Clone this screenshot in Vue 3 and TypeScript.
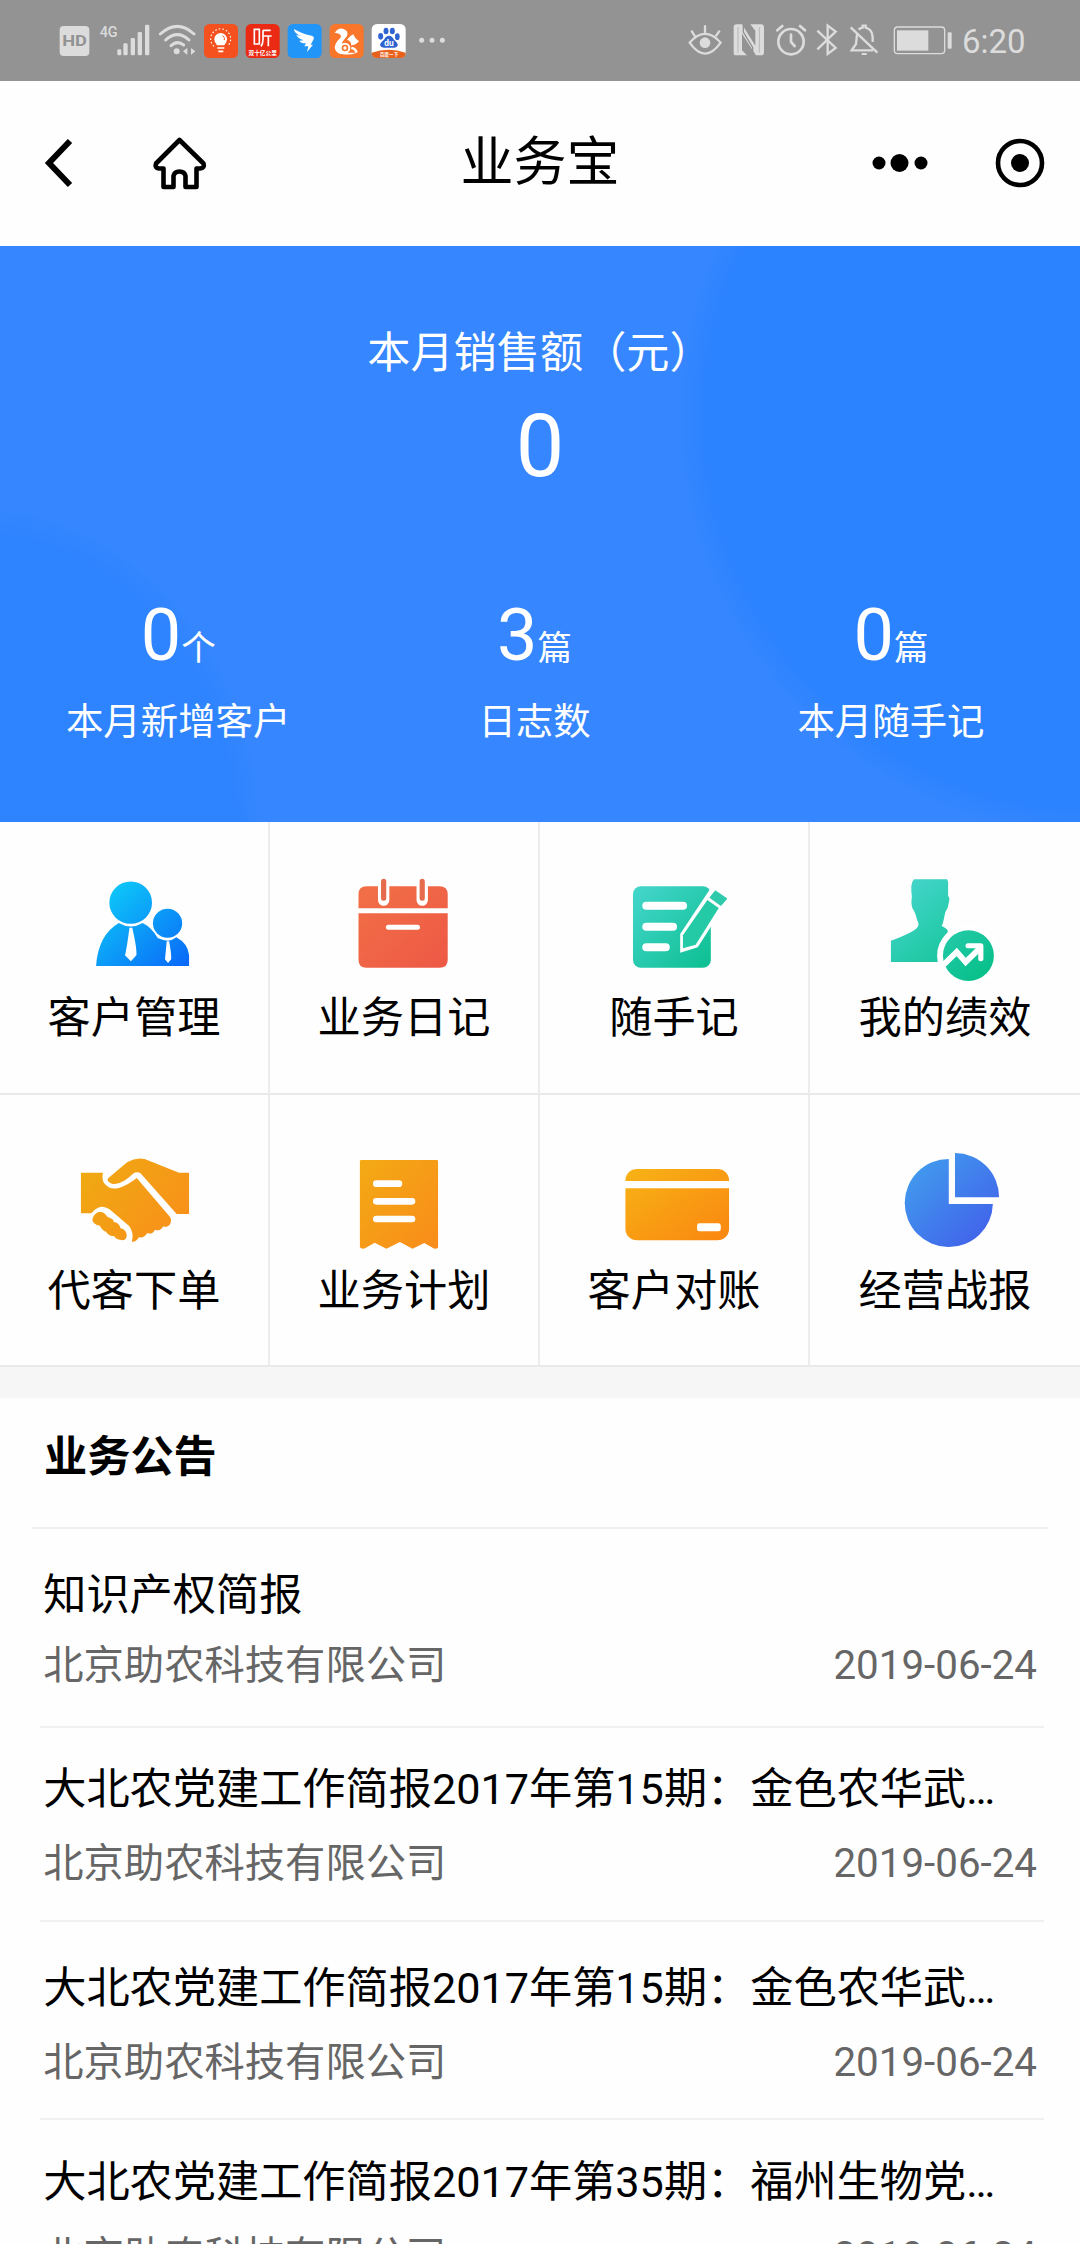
<script setup lang="ts">
interface Stat { value: string; unit: string; label: string }
interface Entry { icon: string; label: string; box: string }
interface Notice { title: string; company: string; date: string }

const stats: Stat[] = [
  { value: '0', unit: '个', label: '本月新增客户' },
  { value: '3', unit: '篇', label: '日志数' },
  { value: '0', unit: '篇', label: '本月随手记' },
]

const entries: Entry[] = [
  { icon: 'customers', label: '客户管理', box: '0 150 784 360' },
  { icon: 'diary', label: '业务日记', box: '784 150 784 360' },
  { icon: 'note', label: '随手记', box: '0 150 784 360' },
  { icon: 'performance', label: '我的绩效', box: '784 150 784 360' },
  { icon: 'order', label: '代客下单', box: '0 156 784 360' },
  { icon: 'plan', label: '业务计划', box: '784 156 784 360' },
  { icon: 'account', label: '客户对账', box: '0 156 784 360' },
  { icon: 'report', label: '经营战报', box: '784 156 784 360' },
]

const company = '北京助农科技有限公司'
const notices: Notice[] = [
  { title: '知识产权简报', company, date: '2019-06-24' },
  { title: '大北农党建工作简报2017年第15期：金色农华武…', company, date: '2019-06-24' },
  { title: '大北农党建工作简报2017年第15期：金色农华武…', company, date: '2019-06-24' },
  { title: '大北农党建工作简报2017年第35期：福州生物党…', company, date: '2019-06-24' },
]
</script>

<template>
  <div class="page">
    <div class="status">
      <div class="status-side">
        <svg width="38" height="40" viewBox="50 60 114 120">
          <rect x="58" y="78" width="89" height="90" rx="12" fill="#dcdcdc" />
          <text x="102.500" y="138" text-anchor="middle" font-size="43" font-weight="700" textLength="74" lengthAdjust="spacingAndGlyphs" fill="#929292">HD</text>
        </svg>
        <svg width="60" height="40" viewBox="164 60 180 120">
          <text x="178" y="112" font-size="46" font-weight="500" textLength="54" lengthAdjust="spacingAndGlyphs" fill="#dcdcdc">4G</text>
          <g fill="#dcdcdc">
            <rect x="231" y="148" width="12" height="18" rx="4" />
            <rect x="249" y="130" width="13" height="36" rx="4" />
            <rect x="271" y="114" width="13" height="52" rx="4" />
            <rect x="292" y="96" width="13" height="70" rx="4" />
            <rect x="314" y="74" width="13" height="92" rx="4" />
          </g>
        </svg>
        <svg width="45.333" height="40" viewBox="344 60 136 120">
          <g fill="none" stroke="#dcdcdc" stroke-width="9" stroke-linecap="round">
            <path d="M360 102Q411 56 461 102" />
            <path d="M376 120Q411 88 446 120" />
            <path d="M392 137Q411 120 430 135" />
          </g>
          <circle cx="409" cy="154" r="9" fill="#dcdcdc" />
          <path d="M441 144V165L428 154ZM452 144V165L465 154Z" fill="#dcdcdc" />
        </svg>
        <svg width="42" height="40" viewBox="478 60 126 120">
          <rect x="490" y="72" width="102" height="102" rx="16" fill="#f4511e" />
          <g stroke="#fff" stroke-width="3.500" stroke-linecap="round" stroke-dasharray="2 9" fill="none"><path d="M519 138A30 30 0 1 1 561 138" /></g>
          <path d="M529 136Q521 128 521 118A19 19 0 0 1 559 118Q559 128 551 136Z" fill="#fff" />
          <path d="M546 107Q553 112 551 120" fill="none" stroke="#f4511e" stroke-width="3" />
          <path d="M530 144H551M533 154H548" stroke="#fff" stroke-width="5" />
        </svg>
        <svg width="42" height="40" viewBox="604 60 126 120">
          <rect x="615" y="72" width="102" height="102" rx="16" fill="#ea2a12" />
          <path d="M641 88H656V132H641ZM667 91H690M667 91V118Q667 132 661 139M667 108H693M683 108V139" fill="none" stroke="#fff" stroke-width="5" />
          <text x="666" y="164" text-anchor="middle" font-size="17" font-weight="700" fill="#fff">双十亿公里</text>
        </svg>
        <svg width="42" height="40" viewBox="730 60 126 120">
          <rect x="741" y="72" width="102" height="102" rx="16" fill="#2196f8" />
          <path d="M760 87Q786 103 813 107Q823 110 818 119L810 134H817L799 156L803 139H791L796 130Q782 131 776 122L789 121Q771 115 767 105L782 108Q760 101 760 87Z" fill="#fff" />
        </svg>
        <svg width="42" height="40" viewBox="856 60 126 120">
          <rect x="867" y="72" width="102" height="102" rx="16" fill="#f9762b" />
          <path d="M882 99Q893 82 909 87Q925 93 919 108Q912 117 905 126Q900 137 905 148Q910 157 924 158H948Q931 166 907 163Q884 160 882 143Q883 130 895 118Q904 110 899 104Q892 98 882 99Z" fill="#fff" />
          <path d="M919 119Q925 108 938 103L944 114L955 124Q945 136 931 136Q934 125 919 119Z" fill="#fff" />
          <circle cx="913" cy="144" r="13" fill="#f9762b" stroke="#fff" stroke-width="6" />
          <circle cx="913" cy="144" r="5" fill="#fff" />
          <path d="M932 144Q944 145 948 158" fill="none" stroke="#fff" stroke-width="7" />
        </svg>
        <svg width="42" height="40" viewBox="982 60 126 120">
          <rect x="993" y="72" width="102" height="102" rx="16" fill="#fff" />
          <path d="M993 158Q1044 141 1095 158Q1095 174 1079 174H1009Q993 174 993 158Z" fill="#e8611c" />
          <g fill="#2f63d0">
            <ellipse cx="1020" cy="109" rx="7.500" ry="10" /><ellipse cx="1036" cy="93" rx="7.500" ry="10" />
            <ellipse cx="1055" cy="93" rx="7.500" ry="10" /><ellipse cx="1070" cy="110" rx="7" ry="10" />
            <path d="M1045 107Q1054 107 1060 119Q1073 129 1071 137Q1067 145 1056 143H1034Q1021 145 1018 136Q1018 128 1030 119Q1036 107 1045 107Z" />
          </g>
          <text x="1045" y="138" text-anchor="middle" font-size="25" font-weight="700" fill="#fff">du</text>
          <text x="1045" y="167" text-anchor="middle" font-size="14" font-weight="700" fill="#fff">百度一下</text>
        </svg>
        <svg width="44" height="40" viewBox="1108 60 132 120" fill="#dcdcdc">
          <circle cx="1143" cy="121" r="7.500" /><circle cx="1174" cy="121" r="7.500" /><circle cx="1205" cy="121" r="7.500" />
        </svg>
      </div>
      <div class="status-side">
        <svg width="45" height="40" viewBox="67 60 135 120" fill="none" stroke="#dcdcdc" stroke-width="7">
          <path d="M87 128Q133 75 180 128Q133 194 87 128ZM92 92L103 109M133 76V98M177 92L165 109" />
          <circle cx="133" cy="128" r="16" fill="#dcdcdc" stroke="none" />
        </svg>
        <svg width="44" height="40" viewBox="202 60 132 120">
          <path d="M227 73H244L284 137V92L269 73H302Q310 73 310 81V158Q310 166 302 166H286L244 101V151L259 166H227Q219 166 219 158V81Q219 73 227 73Z" fill="#dcdcdc" />
          <path d="M248 75V96L276 142V163" fill="none" stroke="#929292" stroke-width="4" />
          <path d="M232 82V158M296 82V158" stroke="#929292" stroke-width="1.500" />
        </svg>
        <svg width="41" height="40" viewBox="334 60 123 120" fill="none" stroke="#dcdcdc" stroke-width="8" stroke-linecap="round">
          <circle cx="391" cy="125" r="38" />
          <path d="M391 104V126L402 138M350 91L365 78M433 91L418 78" />
        </svg>
        <svg width="32" height="40" viewBox="457 60 96 120" fill="none" stroke="#dcdcdc" stroke-width="7">
          <path d="M470 92L525 144L501 162V77L525 95L470 148" />
        </svg>
        <svg width="45" height="40" viewBox="553 60 135 120" fill="none" stroke="#dcdcdc" stroke-width="7">
          <path d="M570 82L650 158M589 103L586 132L573 151H637M594 89Q600 83 606 83V77H615V83Q635 88 636 112V126" />
          <path d="M603 162H618" stroke-width="6" />
        </svg>
        <svg width="68" height="40" viewBox="688 60 204 120">
          <rect x="701" y="81" width="151" height="80" rx="10" fill="none" stroke="#dcdcdc" stroke-width="4" />
          <rect x="709" y="91" width="94" height="61" fill="#dcdcdc" />
          <rect x="861" y="97" width="12" height="49" rx="3" fill="#dcdcdc" />
        </svg>
        <span class="clock">6:20</span>
      </div>
    </div>

    <header class="nav">
      <svg width="240" height="60" viewBox="0 133 240 60" fill="none" stroke="#000">
        <path d="M70 141L49 163L70 185" stroke-width="6" />
        <path d="M179.500 140L156 163.500Q154.500 168 159 168.500H163.500V187H173.500V176Q174.500 171.500 179.500 171.500Q184.500 171.500 185.500 176V187H196.500V168.500H200Q205 168 203.500 163.500Z" stroke-width="4.600" stroke-linejoin="round" />
      </svg>
      <h1>业务宝</h1>
      <svg width="240" height="60" viewBox="840 133 240 60">
        <circle cx="879" cy="163" r="6.500" /><circle cx="899.500" cy="163" r="9" /><circle cx="921" cy="163" r="6.500" />
        <circle cx="1020" cy="163" r="22" fill="none" stroke="#000" stroke-width="4.600" /><circle cx="1020" cy="163" r="9" />
      </svg>
    </header>

    <section class="summary">
      <div class="sales-label">本月销售额（元）</div>
      <div class="sales-value">0</div>
      <div class="stats">
        <div v-for="s in stats" :key="s.label" class="stat">
          <div class="stat-value">{{ s.value }}<span>{{ s.unit }}</span></div>
          <div class="stat-label">{{ s.label }}</div>
        </div>
      </div>
    </section>

    <nav class="grid">
      <div v-for="e in entries" :key="e.icon" class="cell">
        <svg class="cell-icon" :viewBox="e.box" preserveAspectRatio="none">
          <g v-if="e.icon === 'customers'">
            <linearGradient id="g-cust" gradientUnits="userSpaceOnUse" x1="310" y1="190" x2="540" y2="440">
              <stop offset="0" stop-color="#0dccf8" /><stop offset="1" stop-color="#0a68f8" />
            </linearGradient>
            <g fill="url(#g-cust)">
              <ellipse cx="379.500" cy="248" rx="62" ry="63.500" />
              <path d="M279 438Q285 345 345 309Q380 330 414 309Q440 322 458 354Q475 362 487 362Q500 362 512 352Q545 370 549 405V438Z" />
              <ellipse cx="486.500" cy="310" rx="42.500" ry="43.500" />
            </g>
            <path d="M376 323H384Q398 385 396 406L380 424L363 406Q368 385 376 323ZM484 364H491Q498 400 497 418L488 429L479 418Q481 400 484 364Z" fill="#fff" />
          </g>
          <g v-else-if="e.icon === 'diary'">
            <linearGradient id="g-diary" x1="0" y1="0" x2="1" y2="1">
              <stop offset="0" stop-color="#f17046" /><stop offset="1" stop-color="#ee5846" />
            </linearGradient>
            <path d="M1064 199H1276Q1300 199 1300 223V265H1041V223Q1041 199 1064 199ZM1041 280H1300V420Q1300 443 1276 443H1064Q1041 443 1041 420Z" fill="url(#g-diary)" />
            <path d="M1114 181V241M1226 181V241" stroke="#fff" stroke-width="33" stroke-linecap="round" />
            <path d="M1114 184V235M1226 184V235" stroke="#e66a4c" stroke-width="15" stroke-linecap="round" />
            <path d="M1128 322H1212" stroke="#fff" stroke-width="15" stroke-linecap="round" />
          </g>
          <g v-else-if="e.icon === 'note'">
            <linearGradient id="g-note" x1="0" y1="0" x2="1" y2="1">
              <stop offset="0" stop-color="#45d6cd" /><stop offset="1" stop-color="#0cbf91" />
            </linearGradient>
            <rect x="270" y="199" width="226" height="244" rx="23" fill="url(#g-note)" />
            <path d="M309 257H415M309 320H386M309 382H365" stroke="#fff" stroke-width="24" stroke-linecap="round" />
            <path d="M505 190L553 229L458 382L407 398V342Z" fill="#fff" />
            <path d="M486 240L519 264L452 374L415 385V346Z" fill="#24c9a6" />
            <path d="M509 213L542 236L525 256L494 233Z" fill="#2fc9ac" stroke="#2fc9ac" stroke-width="3" stroke-linejoin="round" />
          </g>
          <g v-else-if="e.icon === 'performance'">
            <linearGradient id="g-perf" gradientUnits="userSpaceOnUse" x1="1040" y1="190" x2="1290" y2="480">
              <stop offset="0" stop-color="#45d6cd" /><stop offset="1" stop-color="#06bf88" />
            </linearGradient>
            <path d="M1086 178H1182Q1186 184 1185 195V228Q1191 232 1187 248Q1185 266 1177 276L1172 300Q1170 312 1166 318Q1180 324 1184 332L1180 426H1019V362Q1090 335 1097 320Q1102 312 1095 300Q1090 276 1082 266Q1076 250 1080 232Q1074 190 1086 178Z" fill="url(#g-perf)" />
            <ellipse cx="1244" cy="407" rx="91" ry="93" fill="#fff" />
            <ellipse cx="1244" cy="407" rx="74" ry="76" fill="url(#g-perf)" />
            <path d="M1166 440L1210 396L1236 426L1278 384" fill="none" stroke="#fff" stroke-width="17" />
            <path d="M1243 377H1280V416" fill="none" stroke="#fff" stroke-width="15" stroke-linecap="round" stroke-linejoin="round" />
          </g>
          <g v-else-if="e.icon === 'order'">
            <linearGradient id="g-order" gradientUnits="userSpaceOnUse" x1="240" y1="240" x2="500" y2="450">
              <stop offset="0" stop-color="#f0a912" /><stop offset="1" stop-color="#f8901a" />
            </linearGradient>
            <g fill="url(#g-order)">
              <path d="M314 262L370 213Q395 198 420 204L520 245H549V369H513L408 247Q398 240 388 247Q350 285 325 278Q308 272 314 262Z" />
              <path d="M235 245H299Q295 262 302 276Q318 298 345 291Q372 282 397 261L492 376Q500 385 494 400Q485 412 474 406Q466 422 450 416Q442 432 428 426Q415 444 404 438Q395 454 383 452Q390 425 375 405L318 355Q290 335 265 367H235Z" />
              <path d="M284 364Q296 358 306 370Q312 380 318 380Q332 386 330 393Q346 394 350 412Q366 415 368 432Q368 450 352 447Q336 446 332 436Q314 434 308 422Q296 418 290 404Q270 400 268 386Q272 370 284 364Z" />
            </g>
          </g>
          <g v-else-if="e.icon === 'plan'">
            <linearGradient id="g-plan" x1="0" y1="0" x2="1" y2="1">
              <stop offset="0" stop-color="#f3aa14" /><stop offset="1" stop-color="#f98c1a" />
            </linearGradient>
            <path d="M1049 207H1268Q1272 207 1272 211V470Q1264 476 1256 470L1232 456L1198 473L1161 453L1122 473L1088 455L1060 472Q1050 476 1045 469V211Q1045 207 1049 207Z" fill="url(#g-plan)" />
            <path d="M1093 278H1158M1093 331H1196M1093 384H1196" stroke="#fff" stroke-width="20" stroke-linecap="round" />
          </g>
          <g v-else-if="e.icon === 'account'">
            <linearGradient id="g-acc" x1="0" y1="0" x2="1" y2="1">
              <stop offset="0" stop-color="#f7b316" /><stop offset="1" stop-color="#fa8610" />
            </linearGradient>
            <rect x="248" y="234" width="301" height="214" rx="34" fill="url(#g-acc)" />
            <path d="M240 281H557" stroke="#fff" stroke-width="22" />
            <rect x="456" y="397" width="69" height="24" rx="7" fill="#fff" />
          </g>
          <g v-else>
            <linearGradient id="g-rep" gradientUnits="userSpaceOnUse" x1="1080" y1="250" x2="1280" y2="450">
              <stop offset="0" stop-color="#4198ee" /><stop offset="1" stop-color="#4163ea" />
            </linearGradient>
            <path d="M1187 204V339H1315A128 132 0 1 1 1187 204ZM1205 186A128 132 0 0 1 1333 319H1205Z" fill="url(#g-rep)" />
          </g>
        </svg>
        <div class="cell-label">{{ e.label }}</div>
      </div>
    </nav>

    <section class="notices">
      <h2>业务公告</h2>
      <article v-for="(n, i) in notices" :key="i" class="notice">
        <div class="notice-title">{{ n.title }}</div>
        <div class="notice-meta"><span>{{ n.company }}</span><time>{{ n.date }}</time></div>
      </article>
    </section>
  </div>
</template>

<style>
body {
  margin: 0;
  background: #fff;
}
</style>

<style scoped>
.page {
  width: 1080px;
  height: 2244px;
  overflow: hidden;
  display: flex;
  flex-direction: column;
  background: #fefefe;
  color: #000;
  font-family: Roboto, "Noto Sans CJK SC", sans-serif;
}
.page > * {
  flex: none;
}
svg {
  display: block;
  flex: none;
}
.status {
  box-sizing: border-box;
  height: 81px;
  padding: 20px 54px 0 56.7px;
  display: flex;
  justify-content: space-between;
  background: #939393;
}
.status-side {
  display: flex;
  height: 40px;
}
.clock {
  width: 64px;
  margin-left: 4px;
  font-size: 33px;
  line-height: 43px;
  color: #dcdcdc;
  white-space: nowrap;
}
.nav {
  height: 164.500px;
  display: flex;
  align-items: center;
  justify-content: space-between;
}
.nav h1 {
  margin: 0;
  font-size: 53px;
  font-weight: 400;
  line-height: 70px;
}
.summary {
  box-sizing: border-box;
  height: 576.500px;
  padding-top: 78px;
  color: #fff;
  text-align: center;
  background:
    radial-gradient(ellipse 420px 420px at 1100px 170px, #2c83ff 94%, transparent 100%),
    radial-gradient(ellipse 290px 330px at -30px 590px, #2e84ff 92%, transparent 100%),
    #3586ff;
}
.sales-label {
  font-size: 43.2px;
  line-height: 60px;
}
.sales-value {
  margin-top: 13px;
  font-size: 86.4px;
  line-height: 100px;
}
.stats {
  display: flex;
  margin-top: 94px;
}
.stat {
  width: 33%;
}
.stat-value {
  font-size: 72px;
  line-height: 90px;
  height: 90px;
}
.stat-value span {
  font-size: 34.560px;
}
.stat-label {
  margin-top: 15px;
  font-size: 37.440px;
  line-height: 52px;
}
.grid {
  display: grid;
  grid-template-columns: repeat(4, 270px);
  grid-auto-rows: 272.500px;
}
.cell {
  box-sizing: border-box;
  padding-top: 48px;
  border-right: 2px solid #ececee;
  border-bottom: 2px solid #e9e9ea;
}
.cell:nth-child(4n) {
  border-right: 0;
}
.cell-icon {
  width: 270px;
  height: 120px;
}
.cell-label {
  font-size: 43.2px;
  line-height: 58px;
  text-align: center;
}
.notices {
  border-top: 31px solid #f6f6f6;
}
.notices h2 {
  margin: 0 32px;
  padding-left: 12px;
  height: 129px;
  font-size: 43.2px;
  line-height: 119px;
  font-weight: 700;
  border-bottom: 2px solid #f0f0f0;
}
.notice {
  box-sizing: border-box;
  height: 198.500px;
  margin: 0 36px 0 40px;
  padding: 37px 7px 0 3.2px;
  border-bottom: 2px solid #f0f0f0;
}
.notice:nth-of-type(2) {
  height: 194px;
  padding-top: 32px;
}
.notice:nth-of-type(4) {
  padding-top: 33px;
}
.notice-title {
  font-size: 43.2px;
  line-height: 60px;
  white-space: nowrap;
}
.notice-meta {
  display: flex;
  justify-content: space-between;
  margin-top: 11px;
  font-size: 40.320px;
  line-height: 58px;
  color: #666;
}
.notice:nth-of-type(n + 2) .notice-meta {
  margin-top: 15px;
}
</style>
